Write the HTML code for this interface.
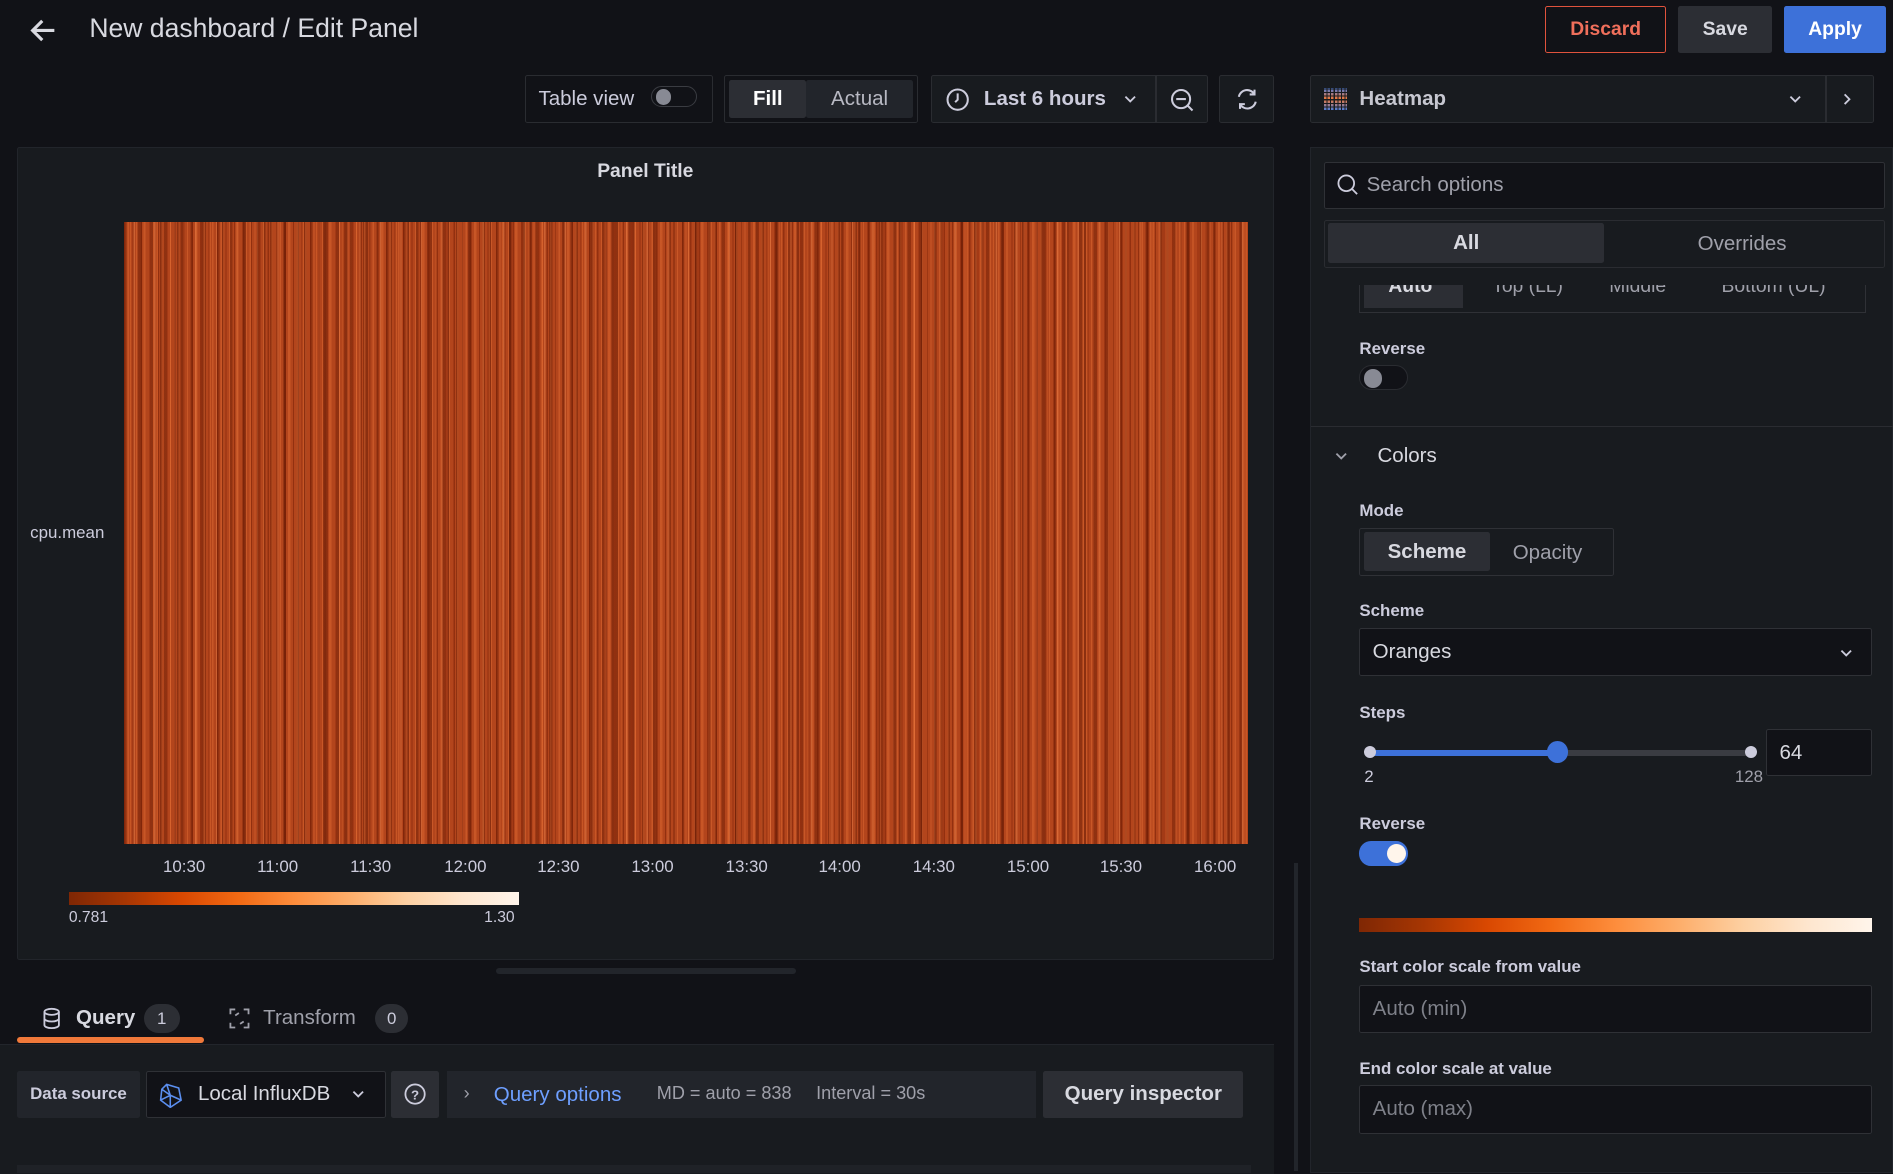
<!DOCTYPE html>
<html><head><meta charset="utf-8"><style>
html,body{margin:0;padding:0;background:#111217;overflow:hidden}
#r{zoom:1.20727;width:1568px;height:972px;position:relative;font-family:"Liberation Sans",sans-serif;color:#ccccdc;font-size:14px}
.a{position:absolute}
.box{position:absolute;border:1px solid #2a2c31;border-radius:2px;box-sizing:border-box}
.btn{position:absolute;display:flex;align-items:center;justify-content:center;border-radius:2px;box-sizing:border-box;font-size:16px;font-weight:bold}
.lbl{position:absolute;font-size:14px;font-weight:bold;color:#ccccdc}
.hm{background:
repeating-linear-gradient(90deg,rgba(120,30,5,.55) 0 1px,transparent 1px 3px,rgba(240,120,60,.35) 3px 4px,transparent 4px 7px),
repeating-linear-gradient(90deg,rgba(90,20,0,.4) 0 2px,transparent 2px 5px,rgba(230,110,50,.4) 5px 6px,transparent 6px 11px),
repeating-linear-gradient(90deg,transparent 0 8px,rgba(250,150,90,.35) 8px 9px,transparent 9px 13px,rgba(100,25,5,.5) 13px 15px,transparent 15px 17px),
#b3451c}
.grad{background:linear-gradient(90deg,#7f2704,#a63603,#d94801,#f16913,#fd8d3c,#fdae6b,#fdd0a2,#fee6ce,#fff5eb)}
</style></head><body><div id="r">
<!-- header -->
<svg class="a" style="left:24px;top:13px" width="24" height="24" viewBox="0 0 24 24"><path d="M21 12H4M11 4l-8 8 8 8" stroke="#d8d9e0" stroke-width="2.6" fill="none"/></svg>
<div class="a" style="left:74px;top:11px;font-size:22px;color:#d8d9e0">New dashboard / Edit Panel</div>
<div class="btn" style="left:1280px;top:5px;width:100px;height:39px;border:1px solid #e0533d;color:#f06f5b">Discard</div>
<div class="btn" style="left:1390px;top:5px;width:78px;height:39px;background:#2c2e34;color:#d8d9e0">Save</div>
<div class="btn" style="left:1478px;top:5px;width:84px;height:39px;background:#3d71d9;color:#fff">Apply</div>
<!-- toolbar -->
<div class="box" style="left:435px;top:62px;width:156px;height:40px"></div>
<div class="a" style="left:446px;top:72px;font-size:17px">Table view</div>
<div class="a" style="left:539px;top:71px;width:38px;height:18px;border:1px solid #3a3c42;border-radius:10px;box-sizing:border-box"></div>
<div class="a" style="left:543px;top:74px;width:13px;height:13px;border-radius:50%;background:#888a94"></div>
<div class="box" style="left:600px;top:62px;width:160px;height:40px"></div>
<div class="btn" style="left:604px;top:66px;width:64px;height:32px;background:#2c2e34;font-size:17px;color:#fff">Fill</div>
<div class="btn" style="left:668px;top:66px;width:88px;height:32px;background:#22252b;font-weight:normal;font-size:17px;color:#b8b9c3">Actual</div>
<div class="box" style="left:771px;top:62px;width:230px;height:40px;background:#181b1f"></div>
<div class="a" style="left:957px;top:62px;width:1px;height:40px;background:#2a2c31"></div>
<svg class="a" style="left:783px;top:72px" width="21" height="21" viewBox="0 0 20 20"><circle cx="10" cy="10" r="8" stroke="#ccccdc" stroke-width="1.6" fill="none"/><path d="M10 5v5l-2 2" stroke="#ccccdc" stroke-width="1.6" fill="none"/></svg>
<div class="a" style="left:815px;top:72px;font-size:17px;font-weight:bold">Last 6 hours</div>
<svg class="a" style="left:930px;top:77px" width="12" height="10"><path d="M2 3l4 4 4-4" stroke="#ccccdc" stroke-width="1.5" fill="none"/></svg>
<svg class="a" style="left:968px;top:72px" width="22" height="22" viewBox="0 0 22 22"><circle cx="10" cy="10" r="7.5" stroke="#ccccdc" stroke-width="1.7" fill="none"/><path d="M6 10h8M15.5 15.5l4 4" stroke="#ccccdc" stroke-width="1.7"/></svg>
<div class="box" style="left:1010px;top:62px;width:45px;height:40px;background:#181b1f"></div>
<svg class="a" style="left:1022px;top:71px" width="22" height="22" viewBox="0 0 22 22"><path d="M4 9a7 7 0 0 1 13-2M18 13a7 7 0 0 1-13 2M17 3v4h-4M5 19v-4h4" stroke="#ccccdc" stroke-width="1.7" fill="none"/></svg>
<!-- panel -->
<div class="a" style="left:14px;top:122px;width:1041px;height:673px;background:#181b1f;border:1px solid #22252b;box-sizing:border-box;border-radius:2px"></div>
<div class="a" style="left:0;top:133px;width:1069px;text-align:center;font-size:16px;font-weight:bold;color:#d8d9e0">Panel Title</div>
<div class="a hm" style="left:103px;top:184px;width:931px;height:515px"></div>
<div class="a" style="left:25px;top:433px;font-size:14px">cpu.mean</div>
<div class="a" style="left:115px;top:710px;width:930px;font-size:14px;color:#ccccdc">
<span class="a" style="left:20px">10:30</span><span class="a" style="left:98px">11:00</span><span class="a" style="left:175px">11:30</span><span class="a" style="left:253px">12:00</span><span class="a" style="left:330px">12:30</span><span class="a" style="left:408px">13:00</span><span class="a" style="left:486px">13:30</span><span class="a" style="left:563px">14:00</span><span class="a" style="left:641px">14:30</span><span class="a" style="left:719px">15:00</span><span class="a" style="left:796px">15:30</span><span class="a" style="left:874px">16:00</span></div>
<div class="a grad" style="left:57px;top:739px;width:373px;height:11px"></div>
<div class="a" style="left:57px;top:753px;font-size:13px">0.781</div>
<div class="a" style="left:401px;top:753px;font-size:13px">1.30</div>
<div class="a" style="left:411px;top:802px;width:248px;height:5px;background:#22252b;border-radius:3px"></div>
<div class="a" style="left:1072px;top:715px;width:3px;height:255px;background:#22252b"></div>
<!-- query tabs -->
<svg class="a" style="left:35px;top:834px" width="16" height="19" viewBox="0 0 16 19"><ellipse cx="8" cy="4" rx="6" ry="2.5" stroke="#ccccdc" stroke-width="1.5" fill="none"/><path d="M2 4v11c0 1.4 2.7 2.5 6 2.5s6-1.1 6-2.5V4M2 9.5c0 1.4 2.7 2.5 6 2.5s6-1.1 6-2.5" stroke="#ccccdc" stroke-width="1.5" fill="none"/></svg>
<div class="a" style="left:63px;top:833px;font-size:17px;font-weight:bold;color:#d8d9e0">Query</div>
<div class="btn" style="left:119px;top:832px;width:30px;height:24px;border-radius:12px;background:#2c2e34;font-size:14px;font-weight:normal">1</div>
<div class="a" style="left:14px;top:859px;width:155px;height:5px;background:#f0793a;border-radius:3px"></div>
<svg class="a" style="left:189px;top:834px" width="19" height="19" viewBox="0 0 19 19"><path d="M2 6V2h4M13 2h4v4M17 13v4h-4M6 17H2v-4M6 7l3-2M13 12l-3 2" stroke="#9fa0aa" stroke-width="1.5" fill="none"/></svg>
<div class="a" style="left:218px;top:833px;font-size:17px;color:#9fa0aa">Transform</div>
<div class="btn" style="left:311px;top:832px;width:27px;height:24px;border-radius:12px;background:#2c2e34;font-size:14px;font-weight:normal">0</div>
<div class="a" style="left:0;top:865px;width:1055px;height:107px;background:#181b1f;border-top:1px solid #22252b"></div>
<div class="btn" style="left:14px;top:887px;width:102px;height:39px;background:#22252b;font-size:14px">Data source</div>
<div class="box" style="left:121px;top:887px;width:199px;height:39px;background:#111217;border-color:#2f3136"></div>
<svg class="a" style="left:130px;top:896px" width="22" height="22" viewBox="0 0 22 22"><path d="M8 2l10 3 2 10-9 6-8-6 1-9z M8 2l3 9 9 4M11 11l-8 4M11 11v10M4 6l7 5" stroke="#5b8ff0" stroke-width="1.3" fill="none"/></svg>
<div class="a" style="left:164px;top:896px;font-size:17px;color:#d8d9e0">Local InfluxDB</div>
<svg class="a" style="left:291px;top:901px" width="12" height="10"><path d="M2 3l4 4 4-4" stroke="#ccccdc" stroke-width="1.5" fill="none"/></svg>
<div class="btn" style="left:324px;top:887px;width:40px;height:39px;background:#2c2e34"><svg width="20" height="20" viewBox="0 0 20 20"><circle cx="10" cy="10" r="8" stroke="#ccccdc" stroke-width="1.5" fill="none"/><text x="10" y="14.5" font-size="11" text-anchor="middle" fill="#ccccdc" font-family="Liberation Sans" font-weight="bold">?</text></svg></div>
<div class="a" style="left:370px;top:887px;width:488px;height:39px;background:#22252b"></div>
<div class="a" style="left:384px;top:897px;font-size:15px;color:#9fa0aa">›</div>
<div class="a" style="left:409px;top:897px;font-size:17px;color:#6e9fff">Query options</div>
<div class="a" style="left:544px;top:897px;font-size:15px;color:#9fa0aa">MD = auto = 838</div>
<div class="a" style="left:676px;top:897px;font-size:15px;color:#9fa0aa">Interval = 30s</div>
<div class="btn" style="left:864px;top:887px;width:166px;height:39px;background:#2c2e34;font-size:17px;color:#d8d9e0">Query inspector</div>
<div class="a" style="left:14px;top:965px;width:1022px;height:7px;background:#1f2227"></div>
<!-- right -->
<div class="box" style="left:1085px;top:62px;width:467px;height:40px;background:#181b1f"></div>
<div class="a" style="left:1512px;top:62px;width:1px;height:40px;background:#2a2c31"></div>
<div class="a" style="left:1097px;top:73px;width:19px;height:18px;background:repeating-linear-gradient(90deg,transparent 0 2px,#181b1f 2px 3px),repeating-linear-gradient(0deg,transparent 0 2px,#181b1f 2px 3px),linear-gradient(180deg,#4d7bd6,#f0793a 50%,#4d7bd6)"></div>
<div class="a" style="left:1126px;top:72px;font-size:17px;font-weight:bold;color:#c6c7d0">Heatmap</div>
<svg class="a" style="left:1481px;top:77px" width="12" height="10"><path d="M2 3l4 4 4-4" stroke="#ccccdc" stroke-width="1.5" fill="none"/></svg>
<svg class="a" style="left:1525px;top:76px" width="10" height="12"><path d="M3 2l4 4-4 4" stroke="#ccccdc" stroke-width="1.5" fill="none"/></svg>
<div class="a" style="left:1085px;top:122px;width:483px;height:850px;background:#181b1f;border:1px solid #22252b;box-sizing:border-box"></div>
<div class="box" style="left:1097px;top:134px;width:464px;height:39px;background:#111217;border-color:#2f3136"></div>
<svg class="a" style="left:1107px;top:143px" width="20" height="20" viewBox="0 0 20 20"><circle cx="8.5" cy="8.5" r="6.5" stroke="#ccccdc" stroke-width="1.5" fill="none"/><path d="M13.5 13.5l4 4" stroke="#ccccdc" stroke-width="1.5"/></svg>
<div class="a" style="left:1132px;top:143px;font-size:17px;color:#9fa0aa">Search options</div>
<div class="box" style="left:1097px;top:182px;width:464px;height:40px"></div>
<div class="btn" style="left:1100px;top:185px;width:229px;height:33px;background:#2c2e34;font-size:17px;color:#d8d9e0">All</div>
<div class="a" style="left:1329px;top:192px;width:228px;text-align:center;font-size:17px;color:#9fa0aa">Overrides</div>
<div class="a" style="left:1126px;top:236px;width:421px;height:24px;overflow:hidden">
<div class="a" style="left:0;top:-24px;width:420px;height:47px;border:1px solid #2f3136;box-sizing:border-box"></div>
<div class="a" style="left:4px;top:-24px;width:82px;height:43px;background:#2c2e34"></div>
<div class="a" style="left:24px;top:-7px;font-size:16px;font-weight:bold;color:#d8d9e0">Auto</div>
<div class="a" style="left:110px;top:-7px;font-size:16px;color:#9fa0aa">Top (LL)</div>
<div class="a" style="left:207px;top:-7px;font-size:16px;color:#9fa0aa">Middle</div>
<div class="a" style="left:300px;top:-7px;font-size:16px;color:#9fa0aa">Bottom (UL)</div></div>
<div class="lbl" style="left:1126px;top:281px">Reverse</div>
<div class="a" style="left:1126px;top:302px;width:40px;height:21px;border:1px solid #2a2c31;border-radius:11px;background:#111217;box-sizing:border-box"></div>
<div class="a" style="left:1130px;top:306px;width:15px;height:15px;border-radius:50%;background:#888a94"></div>
<div class="a" style="left:1086px;top:353px;width:482px;height:1px;background:#2a2c31"></div>
<svg class="a" style="left:1105px;top:373px" width="12" height="10"><path d="M2 3l4 4 4-4" stroke="#9fa0aa" stroke-width="1.5" fill="none"/></svg>
<div class="a" style="left:1141px;top:368px;font-size:17px;color:#d8d9e0">Colors</div>
<div class="lbl" style="left:1126px;top:415px">Mode</div>
<div class="box" style="left:1126px;top:437px;width:211px;height:40px;border-color:#2f3136"></div>
<div class="btn" style="left:1130px;top:441px;width:104px;height:32px;background:#2c2e34;font-size:17px;color:#d8d9e0">Scheme</div>
<div class="a" style="left:1253px;top:448px;font-size:17px;color:#9fa0aa">Opacity</div>
<div class="lbl" style="left:1126px;top:498px">Scheme</div>
<div class="box" style="left:1126px;top:520px;width:425px;height:40px;background:#111217;border-color:#2f3136"></div>
<div class="a" style="left:1137px;top:530px;font-size:17px;color:#d8d9e0">Oranges</div>
<svg class="a" style="left:1523px;top:536px" width="12" height="10"><path d="M2 3l4 4 4-4" stroke="#ccccdc" stroke-width="1.5" fill="none"/></svg>
<div class="lbl" style="left:1126px;top:582px">Steps</div>
<div class="a" style="left:1135px;top:621px;width:315px;height:5px;background:#3a3c42;border-radius:3px"></div>
<div class="a" style="left:1135px;top:621px;width:155px;height:5px;background:#3d71d9"></div>
<div class="a" style="left:1130px;top:618px;width:10px;height:10px;border-radius:50%;background:#ccccdc"></div>
<div class="a" style="left:1445px;top:618px;width:10px;height:10px;border-radius:50%;background:#ccccdc"></div>
<div class="a" style="left:1281px;top:614px;width:18px;height:18px;border-radius:50%;background:#3d71d9"></div>
<div class="a" style="left:1130px;top:635px;font-size:14px">2</div>
<div class="a" style="left:1437px;top:635px;font-size:14px;color:#9fa0aa">128</div>
<div class="box" style="left:1463px;top:604px;width:88px;height:39px;background:#111217;border-color:#2f3136"></div>
<div class="a" style="left:1474px;top:614px;font-size:17px;color:#d8d9e0">64</div>
<div class="lbl" style="left:1126px;top:674px">Reverse</div>
<div class="a" style="left:1126px;top:697px;width:40px;height:20px;border-radius:10px;background:#3d71d9"></div>
<div class="a" style="left:1149px;top:699px;width:16px;height:16px;border-radius:50%;background:#fff5eb"></div>
<div class="a grad" style="left:1126px;top:760px;width:425px;height:12px"></div>
<div class="lbl" style="left:1126px;top:793px">Start color scale from value</div>
<div class="box" style="left:1126px;top:816px;width:425px;height:40px;background:#111217;border-color:#2f3136"></div>
<div class="a" style="left:1137px;top:826px;font-size:17px;color:#7e8089">Auto (min)</div>
<div class="lbl" style="left:1126px;top:877px">End color scale at value</div>
<div class="box" style="left:1126px;top:899px;width:425px;height:40px;background:#111217;border-color:#2f3136"></div>
<div class="a" style="left:1137px;top:909px;font-size:17px;color:#7e8089">Auto (max)</div>
</div></body></html>
